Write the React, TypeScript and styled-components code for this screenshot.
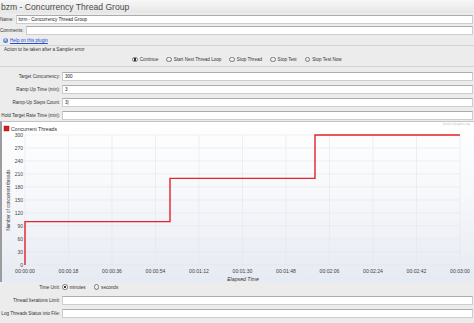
import React from 'react';
import styled, { createGlobalStyle } from 'styled-components';

const GlobalStyle = createGlobalStyle`
  html, body {
    margin: 0;
    padding: 0;
    background: #ececec;
    font-family: "Liberation Sans", Arial, sans-serif;
    color: #333;
  }
  * { box-sizing: border-box; }
`;

const Page = styled.div`
  width: 474px;
  height: 323px;
  overflow: hidden;
  display: flex;
  flex-direction: column;
  background: #ececec;
`;

const TitleBar = styled.div`
  height: 13px;
  padding-left: 1px;
  display: flex;
  align-items: center;
  font-size: 8.6px;
  color: #4a4a4a;
  background: linear-gradient(#f7f7f7, #e6e6e6);
`;

const FieldRow = styled.div<{ $top?: number }>`
  display: flex;
  align-items: center;
  height: 10px;
  margin-top: ${(p) => p.$top ?? 0}px;
  padding-right: 1px;
  gap: 2px;
  font-size: 4.6px;
`;

const Label = styled.span<{ $width?: number }>`
  flex: none;
  white-space: nowrap;
  text-align: ${(p) => (p.$width ? 'right' : 'left')};
  width: ${(p) => (p.$width ? `${p.$width}px` : 'auto')};
  color: #333;
`;

const Input = styled.div`
  flex: 1;
  height: 9px;
  background: #fff;
  border: 1px solid #cdcdcd;
  border-top-color: #acacac;
  display: flex;
  align-items: center;
  padding-left: 2px;
  font-size: 4.6px;
  color: #222;
  white-space: nowrap;
`;

const HelpRow = styled.div`
  display: flex;
  align-items: center;
  gap: 2px;
  height: 8px;
  margin-top: 1px;
  padding-left: 3px;
  font-size: 4.6px;
`;

const HelpIcon = styled.span`
  width: 5px;
  height: 5px;
  border-radius: 50%;
  background: radial-gradient(circle at 35% 35%, #8fb4ec, #2f62c5);
  color: #fff;
  font-size: 3.5px;
  font-weight: bold;
  display: flex;
  align-items: center;
  justify-content: center;
`;

const HelpLink = styled.a`
  color: #1f4fd0;
  text-decoration: underline;
`;

const ErrorPanel = styled.div`
  margin-top: 1px;
  height: 22px;
  border-top: 1px solid #d4d4d4;
  border-bottom: 1px solid #d4d4d4;
  display: flex;
  flex-direction: column;
  font-size: 4.6px;
`;

const PanelTitle = styled.div`
  padding-left: 4px;
  height: 7px;
  display: flex;
  align-items: center;
`;

const RadioGroup = styled.div<{ $center?: boolean }>`
  display: flex;
  align-items: center;
  justify-content: ${(p) => (p.$center ? 'center' : 'flex-start')};
  gap: 8px;
  flex: 1;
  font-size: 4.6px;
`;

const RadioItem = styled.label`
  display: flex;
  align-items: center;
  gap: 2px;
`;

const RadioDot = styled.span<{ $on?: boolean }>`
  width: 5.5px;
  height: 5.5px;
  border-radius: 50%;
  border: 0.7px solid #7a7a7a;
  background: ${(p) =>
    p.$on
      ? 'radial-gradient(circle, #333 0 1.2px, #fff 1.5px)'
      : 'linear-gradient(#fdfdfd, #e2e2e2)'};
`;

const Params = styled.div`
  display: flex;
  flex-direction: column;
  gap: 3px;
  padding-top: 4px;
`;

const ChartBox = styled.div`
  margin-top: 1px;
  height: 161px;
  border-left: 2px solid #9c9c9c;
  border-top: 1px solid #c4c4c4;
  background: linear-gradient(#ffffff 0%, #f7f8fb 45%, #e6eaf2 100%);
`;

const Bottom = styled.div`
  display: flex;
  flex-direction: column;
  gap: 3px;
`;

const xTicks = [
  '00:00:00',
  '00:00:18',
  '00:00:36',
  '00:00:54',
  '00:01:12',
  '00:01:30',
  '00:01:48',
  '00:02:06',
  '00:02:24',
  '00:02:42',
  '00:03:00',
];
const yTicks = [0, 30, 60, 90, 120, 150, 180, 210, 240, 270, 300];

const L = 25;
const R = 460;
const T = 135;
const B = 265;
const px = (i: number) => L + ((R - L) * i) / 10;
const py = (v: number) => B - ((B - T) * v) / 300;

const ThreadsChart = () => (
  <svg width={472} height={161} style={{ display: 'block' }}>
    <g transform="translate(-2,-122)" fontFamily="Liberation Sans, Arial, sans-serif">
      <rect x={4} y={126} width={5} height={5} fill="#e01a1a" stroke="#7a1010" strokeWidth={0.4} />
      <text x={11} y={130.8} fontSize={5.2} fill="#333">
        Concurrent Threads
      </text>
      <text x={470} y={125} fontSize={3.4} fill="#c9c9c9" textAnchor="end">
        jmeter-plugins.org
      </text>
      {yTicks.map((v) => (
        <line key={`h${v}`} x1={L} x2={R} y1={py(v)} y2={py(v)} stroke="#e2e5eb" strokeWidth={0.6} />
      ))}
      {xTicks.map((t, i) => (
        <line key={`v${t}`} x1={px(i)} x2={px(i)} y1={T} y2={B} stroke="#e2e5eb" strokeWidth={0.6} />
      ))}
      {yTicks.map((v) => (
        <text key={`yl${v}`} x={23} y={py(v) + 1.8} fontSize={5} fill="#444" textAnchor="end">
          {v}
        </text>
      ))}
      {xTicks.map((t, i) => (
        <text key={`xl${t}`} x={px(i)} y={272.5} fontSize={5.1} fill="#444" textAnchor="middle">
          {t}
        </text>
      ))}
      <text x={243} y={280.5} fontSize={5.2} fill="#333" fontStyle="italic" textAnchor="middle">
        Elapsed Time
      </text>
      <text
        transform={`translate(10,200) rotate(-90)`}
        fontSize={4.6}
        fill="#333"
        textAnchor="middle"
      >
        Number of concurrent threads
      </text>
      <polyline
        points={`${L},${B} ${L},${py(100)} 170,${py(100)} 170,${py(200)} 315,${py(200)} 315,${py(300)} ${R},${py(300)}`}
        fill="none"
        stroke="#e3222b"
        strokeWidth={1.4}
      />
    </g>
  </svg>
);

const errorActions = ['Continue', 'Start Next Thread Loop', 'Stop Thread', 'Stop Test', 'Stop Test Now'];

const App = () => (
  <Page>
    <GlobalStyle />
    <TitleBar>bzm - Concurrency Thread Group</TitleBar>
    <FieldRow $top={1}>
      <Label>Name:</Label>
      <Input>bzm - Concurrency Thread Group</Input>
    </FieldRow>
    <FieldRow $top={1}>
      <Label>Comments:</Label>
      <Input />
    </FieldRow>
    <HelpRow>
      <HelpIcon>i</HelpIcon>
      <HelpLink>Help on this plugin</HelpLink>
    </HelpRow>
    <ErrorPanel>
      <PanelTitle>Action to be taken after a Sampler error</PanelTitle>
      <RadioGroup $center>
        {errorActions.map((a, i) => (
          <RadioItem key={a}>
            <RadioDot $on={i === 0} />
            {a}
          </RadioItem>
        ))}
      </RadioGroup>
    </ErrorPanel>
    <Params>
      <FieldRow>
        <Label $width={60}>Target Concurrency:</Label>
        <Input>300</Input>
      </FieldRow>
      <FieldRow>
        <Label $width={60}>Ramp Up Time (min):</Label>
        <Input>3</Input>
      </FieldRow>
      <FieldRow>
        <Label $width={60}>Ramp-Up Steps Count:</Label>
        <Input>3|</Input>
      </FieldRow>
      <FieldRow>
        <Label $width={60}>Hold Target Rate Time (min):</Label>
        <Input />
      </FieldRow>
    </Params>
    <ChartBox>
      <ThreadsChart />
    </ChartBox>
    <Bottom>
      <FieldRow>
        <Label $width={60}>Time Unit:</Label>
        <RadioGroup>
          <RadioItem>
            <RadioDot $on />
            minutes
          </RadioItem>
          <RadioItem>
            <RadioDot />
            seconds
          </RadioItem>
        </RadioGroup>
      </FieldRow>
      <FieldRow>
        <Label $width={60}>Thread Iterations Limit:</Label>
        <Input />
      </FieldRow>
      <FieldRow>
        <Label $width={60}>Log Threads Status into File:</Label>
        <Input />
      </FieldRow>
    </Bottom>
  </Page>
);

export default App;
